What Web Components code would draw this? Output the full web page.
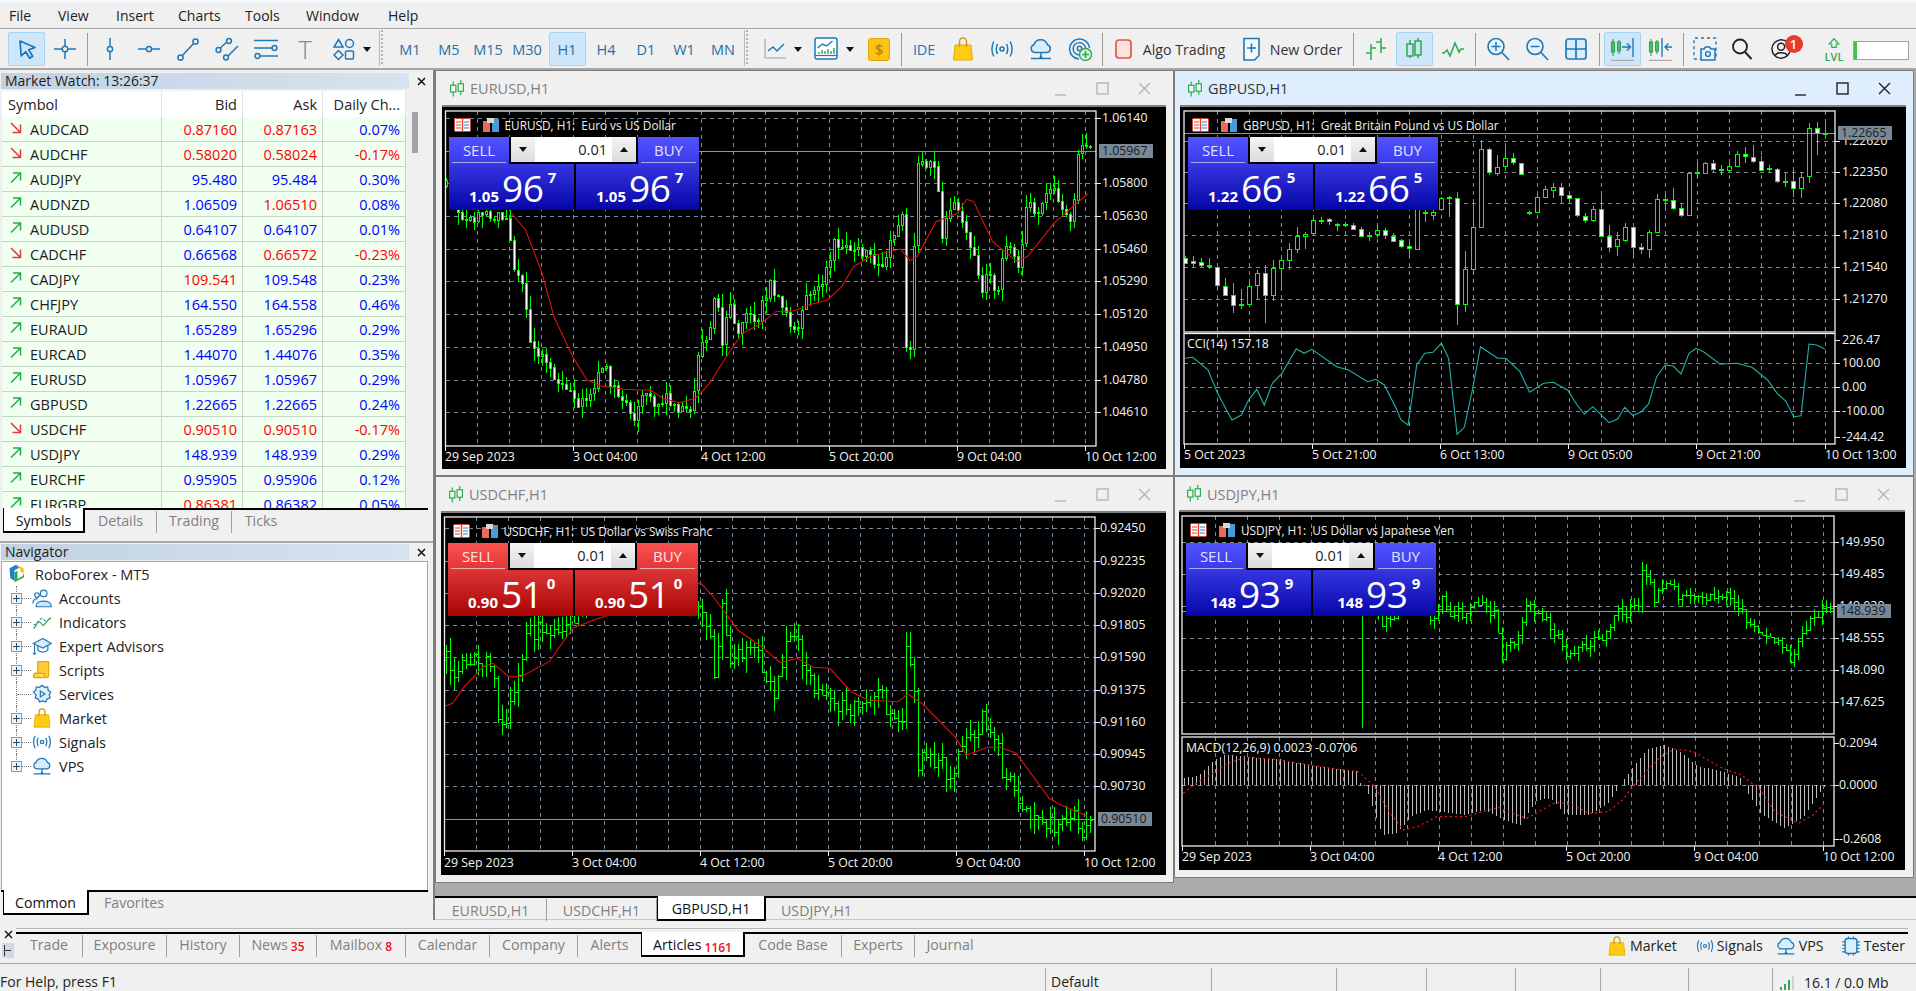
<!DOCTYPE html>
<html>
<head>
<meta charset="utf-8">
<title>MetaTrader 5</title>
<style>
  html, body { margin: 0; height: 100%; overflow: hidden; }
  body { width: 1916px; height: 991px; display: flex; flex-direction: column; background: #f0f0f0; color: #222;
         font: 14.5px "Open Sans", "Noto Sans", sans-serif; }
</style>
</head>
<body>
<mt-menubar></mt-menubar>
<mt-toolbar></mt-toolbar>
<mt-workspace>
  <market-watch slot="left"></market-watch>
  <nav-panel slot="left"></nav-panel>
  <chart-window slot="col1" name="EURUSD,H1" key="eurusd" hgt="406" pl="6" cw="724" ch="362" pb="6"></chart-window>
  <chart-window slot="col1" name="USDCHF,H1" key="usdchf" hgt="407" pl="5" cw="725" ch="362" pb="7"></chart-window>
  <chart-window slot="col2" name="GBPUSD,H1" key="gbpusd" hgt="406" pl="5" cw="726" ch="361" pb="7" active></chart-window>
  <chart-window slot="col2" name="USDJPY,H1" key="usdjpy" hgt="402" pl="4" cw="726" ch="358" pb="7"></chart-window>
  <tab-strip slot="tabs" flat>
    <mt-tab w="112">EURUSD,H1</mt-tab>
    <mt-tab w="110">USDCHF,H1</mt-tab>
    <mt-tab w="109" active>GBPUSD,H1</mt-tab>
    <mt-tab w="101" last>USDJPY,H1</mt-tab>
  </tab-strip>
</mt-workspace>
<mt-toolbox></mt-toolbox>
<mt-statusbar></mt-statusbar>

<script>
// icons, all on a 24x24 box
const B = '#1f78b8';
const ICONS = {
  cursor: `<path d="M5 4 20 10.5l-6.3 2.4 4 6.3-3 2-3.9-6.5-4.6 4.3z" fill="none" stroke="#1b74bb" stroke-width="1.7" stroke-linejoin="round"/>`,
  cross: `<path d="M12 2v20M1 12h22" stroke="${B}" stroke-width="1.5"/><circle cx="12" cy="12" r="2.8" fill="#f0f0f0" stroke="${B}" stroke-width="1.5"/>`,
  vline: `<path d="M12 1v22" stroke="${B}" stroke-width="1.5"/><circle cx="12" cy="12" r="2.6" fill="#f0f0f0" stroke="${B}" stroke-width="1.5"/>`,
  hline: `<path d="M1 12h22" stroke="${B}" stroke-width="1.5"/><circle cx="12" cy="12" r="2.6" fill="#f0f0f0" stroke="${B}" stroke-width="1.5"/>`,
  trend: `<path d="M5 20 19 5" stroke="${B}" stroke-width="1.5"/><circle cx="4.5" cy="20.5" r="2.6" fill="#f0f0f0" stroke="${B}" stroke-width="1.5"/><circle cx="19.5" cy="4.5" r="2.6" fill="#f0f0f0" stroke="${B}" stroke-width="1.5"/>`,
  channel: `<path d="M3 13 13 4M10 22 23 9" stroke="${B}" stroke-width="1.5"/><circle cx="3.5" cy="13" r="2.4" fill="#f0f0f0" stroke="${B}" stroke-width="1.5"/><circle cx="14" cy="4" r="2.4" fill="#f0f0f0" stroke="${B}" stroke-width="1.5"/><circle cx="11" cy="20.5" r="2.4" fill="#f0f0f0" stroke="${B}" stroke-width="1.5"/>`,
  fibo: `<path d="M0 3.5h24M0 11h18M5 19h19" stroke="${B}" stroke-width="1.6"/><circle cx="20.5" cy="11" r="2.4" fill="#f0f0f0" stroke="${B}" stroke-width="1.5"/><circle cx="3.5" cy="19" r="2.4" fill="#f0f0f0" stroke="${B}" stroke-width="1.5"/>`,
  shapes: `<path d="M6.5 2.5 11 10H2z" fill="none" stroke="${B}" stroke-width="1.5"/><circle cx="17.5" cy="6.5" r="4" fill="none" stroke="${B}" stroke-width="1.5"/><path d="M6.5 13.5l4.5 4.5-4.5 4.5L2 18z" fill="none" stroke="${B}" stroke-width="1.5"/><rect x="13.5" y="14" width="8" height="8" rx="1" fill="none" stroke="${B}" stroke-width="1.5"/>`,
  linechart: `<path d="M2 2v19h21" fill="none" stroke="#bbb" stroke-width="1.6"/><path d="M5 14l5-4 4 4 7-7" fill="none" stroke="${B}" stroke-width="1.5"/>`,
  chartwin: `<rect x="1" y="1" width="22" height="21" rx="2" fill="#fff" stroke="${B}" stroke-width="1.5"/><path d="M3.5 11l5-4 4 2 6-5" fill="none" stroke="${B}" stroke-width="1.4"/><path d="M5 17v-2M8 17v-4M11 17v-3M14 17v-5M17 17v-3M20 17v-6" stroke="#2fa84f" stroke-width="1.4"/><path d="M1 18.5h22" stroke="${B}" stroke-width="1.2"/>`,
  bag: `<path d="M4 8h16l1.5 15h-19z" fill="#ffcc11" stroke="#e3a90a"/><path d="M8.5 10V4.5a3.5 3.5 0 0 1 7 0V10" fill="none" stroke="#d19a0c" stroke-width="1.5"/>`,
  signal: `<circle cx="12" cy="12" r="2" fill="none" stroke="${B}" stroke-width="1.6"/><path d="M7.5 7Q5 12 7.5 17M16.5 7Q19 12 16.5 17M3.8 4.5Q0 12 3.8 19.5M20.2 4.5Q24 12 20.2 19.5" fill="none" stroke="${B}" stroke-width="1.5"/>`,
  cloud: `<path d="M6 15.5a4 4 0 0 1-1-7.8 7 7 0 0 1 13.4 0A4 4 0 0 1 18 15.5z" fill="#d8ecfa" stroke="${B}" stroke-width="1.5"/><path d="M12 15.5V21M2 21.5h20" stroke="${B}" stroke-width="1.5"/><circle cx="12" cy="20.5" r="1.6" fill="${B}"/>`,
  radar: `<path d="M11 22A10 10 0 1 1 21.5 11M11 18A6.2 6.2 0 1 1 17.5 11" fill="none" stroke="${B}" stroke-width="1.5"/><circle cx="11.5" cy="11.5" r="2.2" fill="none" stroke="${B}" stroke-width="1.5"/><circle cx="17.5" cy="17.5" r="6" fill="#d6f3dc" stroke="#2fa84f" stroke-width="1.4"/><path d="M17.5 14v7M14 17.5h7" stroke="#2fa84f" stroke-width="1.6"/>`,
  algo: `<rect x="4" y="3" width="15" height="18" rx="3" fill="#fde3de" stroke="#e0584a" stroke-width="1.7"/>`,
  neworder: `<path d="M4 1.5h15v17l-4.5 4.5H4z" fill="#f4fafe" stroke="${B}" stroke-width="1.6"/><path d="M11.5 6.5v9M7 11h9" stroke="${B}" stroke-width="1.6"/>`,
  bars: `<path d="M8 7v16M3 16h5M8 11h5M18 1v15M13 5h5M18 11h5" stroke="#2fa84f" stroke-width="1.5" fill="none"/>`,
  candles: `<path d="M8 3v18M16 1v20" stroke="#2fa84f" stroke-width="1.5"/><rect x="5" y="7" width="6" height="12" fill="#cce4f7" stroke="#2fa84f" stroke-width="1.5"/><rect x="13" y="4" width="6" height="14" fill="#cce4f7" stroke="#2fa84f" stroke-width="1.5"/>`,
  zigzag: `<path d="M1 16h2l3-3 3 6 5-13 4 9 2-3h3" fill="none" stroke="#2fa84f" stroke-width="1.6"/>`,
  zoomin: `<circle cx="10" cy="9.5" r="8" fill="#e6f3fc" stroke="${B}" stroke-width="1.6"/><path d="M16 15.5 23 23" stroke="${B}" stroke-width="1.7"/><path d="M10 5v9M5.5 9.5h9" stroke="${B}" stroke-width="1.5"/>`,
  zoomout: `<circle cx="10" cy="9.5" r="8" fill="#e6f3fc" stroke="${B}" stroke-width="1.6"/><path d="M16 15.5 23 23" stroke="${B}" stroke-width="1.7"/><path d="M5.5 9.5h9" stroke="${B}" stroke-width="1.5"/>`,
  grid: `<rect x="2" y="2" width="20" height="20" rx="2.5" fill="#d8ecfa" stroke="${B}" stroke-width="1.7"/><path d="M12 2v20M2 12h20" stroke="${B}" stroke-width="1.7"/>`,
  autoscroll: `<path d="M3 2v17M9 3v14" stroke="#2fa84f" stroke-width="1.2"/><rect x="1.5" y="5" width="3" height="10" fill="#2fa84f66" stroke="#2fa84f" stroke-width="1.1"/><rect x="7.5" y="5" width="3" height="9" fill="#2fa84f66" stroke="#2fa84f" stroke-width="1.1"/><path d="M12 10h8M17 6.5l3.5 3.5-3.5 3.5" fill="none" stroke="${B}" stroke-width="1.4"/><path d="M23 1v19" stroke="${B}" stroke-width="1.4"/><path d="M1 23.5h23" stroke="#aaa" stroke-width="1.4"/>`,
  shift: `<path d="M3 2v17M9 3v14" stroke="#2fa84f" stroke-width="1.2"/><rect x="1.5" y="5" width="3" height="10" fill="#2fa84f66" stroke="#2fa84f" stroke-width="1.1"/><rect x="7.5" y="5" width="3" height="9" fill="#2fa84f66" stroke="#2fa84f" stroke-width="1.1"/><path d="M14 1v19" stroke="${B}" stroke-width="1.4"/><path d="M24 10h-7M20.5 6.5 17 10l3.5 3.5" fill="none" stroke="${B}" stroke-width="1.4"/><path d="M1 23.5h23" stroke="#aaa" stroke-width="1.4"/>`,
  shot: `<rect x="1" y="1" width="22" height="21" rx="1" fill="none" stroke="${B}" stroke-width="1.4" stroke-dasharray="3 3"/><path d="M8 12h3l1.5-2h4l1.5 2h4v11H8z" fill="#e6f3fc" stroke="${B}" stroke-width="1.5"/><circle cx="15" cy="17" r="2.4" fill="none" stroke="${B}" stroke-width="1.4"/>`,
  search: `<circle cx="10" cy="9.5" r="7" fill="none" stroke="#222" stroke-width="1.8"/><path d="M15 15l6.5 7" stroke="#222" stroke-width="2"/>`,
  profile: `<circle cx="11" cy="12" r="10" fill="none" stroke="#222" stroke-width="1.6"/><circle cx="11" cy="9.5" r="3.8" fill="none" stroke="#222" stroke-width="1.6"/><path d="M4.5 19c1.5-4 11.5-4 13 0" fill="none" stroke="#222" stroke-width="1.6"/>`,
  arrowup: `<path d="M12 1 5.5 8H9v4.5h6V8h3.5z" fill="#e6f8ea" stroke="#2fa84f" stroke-width="1.5"/>`,
  accounts: `<circle cx="14" cy="6.5" r="4" fill="#eaf5fc" stroke="${B}" stroke-width="1.4"/><circle cx="6" cy="8.5" r="2.8" fill="#eaf5fc" stroke="${B}" stroke-width="1.4"/><path d="M5 21c0-7 18-7 18 0v1.5H5zM1 18.5c0-5 3-6 6-5.5" fill="#cfe6f7" stroke="${B}" stroke-width="1.4"/>`,
  indicators: `<path d="M2 20c3-3 4-9 7-8s3 6 6 3 4-7 8-8" fill="none" stroke="#2fa84f" stroke-width="1.5"/><path d="M2 15c4 1 6-6 9-7s5 5 8 2" fill="none" stroke="${B}" stroke-width="1.3" stroke-dasharray="3 2"/>`,
  advisors: `<path d="M13 3 1.5 9 13 14.5 23 9z" fill="#dbeefb" stroke="${B}" stroke-width="1.5"/><path d="M7 12v5c3 3 9 3 12 0v-5.5" fill="none" stroke="${B}" stroke-width="1.5"/><path d="M3 10v10" stroke="${B}" stroke-width="1.4"/><circle cx="3" cy="21" r="1.6" fill="${B}"/>`,
  scripts: `<path d="M7 2h13v17a2 2 0 0 1-2 2H3c-1 0-2-1-1-3l1-2h4z" fill="#ffcc33" stroke="#e3a90a" stroke-width="1.5"/><path d="M3 16h12l-1 5" fill="#ffe07a" stroke="#e3a90a" stroke-width="1.4"/>`,
  services: `<path d="M12 1.5l3 2.5 3.8-.4.6 3.8 3 2.4-1.7 3.3 1 3.6-3.6 1.4-1.7 3.4-3.6-1.2-3.6 1.2-1.7-3.4-3.6-1.4 1-3.6L1.6 9.8l3-2.4.6-3.8L9 4z" fill="#dbeefb" stroke="${B}" stroke-width="1.5"/><path d="M10 8.5v7l5.5-3.5z" fill="none" stroke="${B}" stroke-width="1.4"/>`,
  robo: `<path d="M3 5 11 1l5 3-7 3.5V20l-5-3z" fill="#1f7fd0"/><path d="M11 1l9 4v6l-4-2V5.5L13 4z" fill="#f2c318"/><path d="M9 22V10l3.5-2V18l7-4v-2l1-.5V16z" fill="#2aa84a"/>`,
  cpu: `<rect x="5" y="3" width="14" height="18" rx="3" fill="#dbeefb" stroke="${B}" stroke-width="1.6"/><path d="M1.5 7H5M1.5 11H5M1.5 15H5M1.5 19H5M19 7h3.5M19 11h3.5M19 15h3.5M19 19h3.5M9 3V.5M15 3V.5M9 21v2.5M15 21v2.5" stroke="${B}" stroke-width="1.4"/>`,
  candle: `<path d="M7 2v20M17 0v20" stroke="#2fa84f" stroke-width="1.6"/><rect x="3.5" y="7" width="7" height="9" fill="#f0fff0" stroke="#2fa84f" stroke-width="1.6"/><rect x="13.5" y="5" width="7" height="10" fill="#f0fff0" stroke="#2fa84f" stroke-width="1.6"/>`
};
const icon = (n, s = 24) => `<svg width="${s}" height="${s}" viewBox="0 0 24 24" style="display:block;flex:none">${ICONS[n]}</svg>`;

class MtMenubar extends HTMLElement {
  connectedCallback() {
    const menu = [['File', 49], ['View', 58], ['Insert', 62], ['Charts', 67], ['Tools', 61], ['Window', 82], ['Help', 40]];
    this.attachShadow({mode: 'open'}).innerHTML = `<style>
      :host { display: flex; flex: none; height: 25px; border-top: 3px solid #f6f7fb; border-bottom: 1px solid #a6a6a6; padding-left: 9px; align-items: center; font-size: 14px; color: #222; }
      span { flex: none; }
    </style>` + menu.map(m => `<span style="width:${m[1]}px">${m[0]}</span>`).join('');
  }
}
customElements.define('mt-menubar', MtMenubar);

// toolbar: each item names the x centre it sits on, margins come from that
class MtToolbar extends HTMLElement {
  connectedCallback() {
    const items = [
      {c: 26.5, i: 'cursor', on: 1}, {c: 65, i: 'cross'}, {c: 87.5, sep: 1},
      {c: 110, i: 'vline'}, {c: 149, i: 'hline'}, {c: 188, i: 'trend'}, {c: 227, i: 'channel'}, {c: 266, i: 'fibo'},
      {c: 305, t: 'T', cls: 'big'}, {c: 344, i: 'shapes'}, {c: 367, caret: 1}, {c: 382, grip: 1},
      {c: 410, t: 'M1'}, {c: 449, t: 'M5'}, {c: 488, t: 'M15'}, {c: 527, t: 'M30'}, {c: 567, t: 'H1', on: 1}, {c: 606, t: 'H4'}, {c: 646, t: 'D1'}, {c: 684, t: 'W1'}, {c: 723, t: 'MN'}, {c: 747, grip: 1},
      {c: 775, i: 'linechart'}, {c: 798, caret: 1}, {c: 826, i: 'chartwin'}, {c: 850, caret: 1}, {c: 879, dollar: 1}, {c: 901, sep: 1},
      {c: 924, t: 'IDE', cls: 'ide'}, {c: 963, i: 'bag'}, {c: 1002, i: 'signal'}, {c: 1041, i: 'cloud'}, {c: 1080, i: 'radar'}, {c: 1102.5, sep: 1},
      {c: 1124, i: 'algo'}, {c: 1184, t: 'Algo Trading', cls: 'txt', w: 88}, {c: 1252, i: 'neworder'}, {c: 1306, t: 'New Order', cls: 'txt', w: 74}, {c: 1353, sep: 1},
      {c: 1375, i: 'bars'}, {c: 1414, i: 'candles', on: 1}, {c: 1453, i: 'zigzag'}, {c: 1475.5, sep: 1},
      {c: 1498, i: 'zoomin'}, {c: 1537, i: 'zoomout'}, {c: 1576, i: 'grid'}, {c: 1599, sep: 1},
      {c: 1622, i: 'autoscroll', on: 1}, {c: 1660, i: 'shift'}, {c: 1683, sep: 1},
      {c: 1705, i: 'shot'}, {c: 1742, i: 'search'}, {c: 1782, profile: 1}, {c: 1834, lvl: 1}, {c: 1881, meter: 1}
    ];
    let end = 0, html = '';
    for (const it of items) {
      const w = it.w || (it.sep ? 3 : it.caret ? 10 : it.grip ? 6 : it.meter ? 56 : 37);
      const ml = it.c - w / 2 - end;
      end = it.c + w / 2;
      const st = `width:${w}px;margin-left:${ml}px`;
      if (it.sep) html += `<div class="sep" style="${st}"></div>`;
      else if (it.caret) html += `<div class="caret" style="${st}"></div>`;
      else if (it.grip) html += `<div class="grip" style="${st}"></div>`;
      else if (it.meter) html += `<div class="meter" style="${st}"><b></b></div>`;
      else if (it.dollar) html += `<div class="b" style="${st}"><span class="usd">$</span></div>`;
      else if (it.profile) html += `<div class="b" style="${st}">${icon('profile', 22)}<span class="badge">1</span></div>`;
      else if (it.lvl) html += `<div class="b lvl" style="${st}">${icon('arrowup', 18)}<span>LVL</span></div>`;
      else if (it.t) html += `<div class="b ${it.cls || 'tf'}${it.on ? ' on' : ''}" style="${st}">${it.t}</div>`;
      else html += `<div class="b${it.on ? ' on' : ''}" style="${st}">${icon(it.i)}</div>`;
    }
    this.attachShadow({mode: 'open'}).innerHTML = `<style>
      :host { display: flex; flex: none; box-sizing: border-box; height: 41px; border-bottom: 2px solid #a6a6a6; padding-top: 3px; align-items: flex-start; }
      .b { flex: none; box-sizing: border-box; height: 34px; display: flex; align-items: center; justify-content: center; border: 1px solid transparent; border-radius: 2px; position: relative; white-space: nowrap; }
      .on { background: #cde6f9; border-color: #a8d4f3; }
      .tf { color: #1f6fa5; font-size: 14.5px; }
      .big { color: #5a93bd; font-size: 26px; font-weight: 300; }
      .ide { color: #1f78b8; font-size: 14.5px; letter-spacing: -.2px; }
      .txt { color: #333; font-size: 14.2px; }
      .sep { flex: none; height: 33px; margin-top: 1px; position: relative; }
      .sep::after { content: ''; position: absolute; left: 1px; top: 0; bottom: 0; width: 1px; background: #9a9a9a; }
      .caret { flex: none; height: 32px; position: relative; }
      .caret::after { content: ''; position: absolute; left: 1px; top: 15px; border: 4.5px solid transparent; border-top: 5px solid #111; border-bottom: 0; }
      .grip { flex: none; height: 36px; margin-top: -2px; background: repeating-linear-gradient(#b5b5b5 0 2px, transparent 2px 4px); background-size: 2px 100%; background-repeat: no-repeat; background-position: 1px 0; border-left: 1px solid #bdbdbd; box-sizing: border-box; }
      .usd { width: 20px; height: 21px; border-radius: 3px; background: #fcc419; border: 1px solid #e0a400; color: #b5830a; font-size: 15px; font-weight: 600; display: flex; align-items: center; justify-content: center; }
      .badge { position: absolute; left: 20px; top: 2px; width: 18px; height: 18px; border-radius: 50%; background: #e8392b; color: #fff; font-size: 13px; font-weight: 600; display: flex; align-items: center; justify-content: center; }
      .lvl { flex-direction: column; justify-content: flex-start; padding-top: 5px; line-height: 10px; }
      .lvl span { color: #2fa84f; font-size: 11px; font-weight: 600; margin-top: -4px; }
      .meter { flex: none; box-sizing: border-box; height: 19px; margin-top: 9px; border: 1px solid #a0a0a0; background: #fff; }
      .meter b { display: block; width: 3px; height: 100%; background: #41c24a; }
    </style>${html}`;
  }
}
customElements.define('mt-toolbar', MtToolbar);

class MtWorkspace extends HTMLElement {
  connectedCallback() {
    this.attachShadow({mode: 'open'}).innerHTML = `<style>
      :host { display: flex; flex: none; height: 850px; }
      .left { width: 433px; flex: none; display: flex; flex-direction: column; }
      .mdi { flex: 1; display: flex; flex-direction: column; border-left: 2px solid #808080; min-width: 0; }
      .area { flex: none; height: 826px; background: #ababab; display: flex; align-items: flex-start; }
      .col { display: flex; flex-direction: column; }
      .c1 { width: 739px; }
      .c2 { width: 740px; }
    </style>
    <div class="left"><slot name="left"></slot></div>
    <div class="mdi">
      <div class="area">
        <div class="col c1"><slot name="col1"></slot></div>
        <div class="col c2"><slot name="col2"></slot></div>
      </div>
      <slot name="tabs"></slot>
    </div>`;
  }
}
customElements.define('mt-workspace', MtWorkspace);

class TabStrip extends HTMLElement {
  connectedCallback() {
    this.attachShadow({mode: 'open'}).innerHTML = `<style>
      :host { display: flex; flex: none; box-sizing: border-box; height: 25px; border-top: 2px solid #000; --tab-pb: 4px; }
      :host([flat]) { height: 24px; border-bottom: 1px solid #c8c8c8; --tab-pb: 0px; }
    </style><slot></slot>`;
  }
}
customElements.define('tab-strip', TabStrip);

class MtTab extends HTMLElement {
  connectedCallback() {
    this.attachShadow({mode: 'open'}).innerHTML = `<style>
      :host { display: flex; flex: none; position: relative; box-sizing: border-box; align-items: center; justify-content: center; width: ${this.getAttribute('w')}px; height: 22px; margin-top: 1px; padding-bottom: var(--tab-pb, 4px); color: #808080; font-size: 14.2px; border-right: 1px solid #a0a0a0; white-space: nowrap; }
      :host([last]) { border-right: 0; }
      :host([active]) { color: #111; background: #fff; height: 25px; margin-top: -2px; padding-top: 2px; padding-bottom: 0; border-left: 1px solid #000; border-right: 2px solid #000; border-bottom: 2px solid #000; }
    </style><slot></slot>`;
  }
}
customElements.define('mt-tab', MtTab);

class PaneTitle extends HTMLElement {
  connectedCallback() {
    this.attachShadow({mode: 'open'}).innerHTML = `<style>
      :host { display: flex; flex: none; height: 16px; align-items: center; font-size: 14px; color: #1d1d1d; }
      .bar { width: 408px; height: 16px; margin-left: 1px; padding-left: 4px; box-sizing: border-box; line-height: 15px; background: linear-gradient(90deg, #c2d2e2, #d6e3f0); white-space: nowrap; }
      svg { margin-left: 8px; }
    </style><div class="bar"><slot></slot></div>
    <svg width="9" height="9" viewBox="0 0 9 9"><path d="M1 1l7 7M8 1 1 8" stroke="#111" stroke-width="1.5"/></svg>`;
  }
}
customElements.define('pane-title', PaneTitle);

const UP = `<svg width="13" height="13" viewBox="0 0 13 13"><path d="M2 11.5 11 2.5M4 2h7.5v7.5" fill="none" stroke="#1fae4c" stroke-width="1.5"/></svg>`;
const DN = `<svg width="13" height="13" viewBox="0 0 13 13"><path d="M2 2 11 11M11.5 3.5V11.5H3.5" fill="none" stroke="#e23a3a" stroke-width="1.5"/></svg>`;

class MarketWatch extends HTMLElement {
  connectedCallback() {
    const rows = [
      ['d', 'AUDCAD', '0.87160', 'r', '0.87163', 'r', '0.07%', 'b'],
      ['d', 'AUDCHF', '0.58020', 'r', '0.58024', 'r', '-0.17%', 'r'],
      ['u', 'AUDJPY', '95.480', 'b', '95.484', 'b', '0.30%', 'b'],
      ['u', 'AUDNZD', '1.06509', 'b', '1.06510', 'r', '0.08%', 'b'],
      ['u', 'AUDUSD', '0.64107', 'b', '0.64107', 'b', '0.01%', 'b'],
      ['d', 'CADCHF', '0.66568', 'b', '0.66572', 'r', '-0.23%', 'r'],
      ['u', 'CADJPY', '109.541', 'r', '109.548', 'b', '0.23%', 'b'],
      ['u', 'CHFJPY', '164.550', 'b', '164.558', 'b', '0.46%', 'b'],
      ['u', 'EURAUD', '1.65289', 'b', '1.65296', 'b', '0.29%', 'b'],
      ['u', 'EURCAD', '1.44070', 'b', '1.44076', 'b', '0.35%', 'b'],
      ['u', 'EURUSD', '1.05967', 'b', '1.05967', 'b', '0.29%', 'b'],
      ['u', 'GBPUSD', '1.22665', 'b', '1.22665', 'b', '0.24%', 'b'],
      ['d', 'USDCHF', '0.90510', 'r', '0.90510', 'r', '-0.17%', 'r'],
      ['u', 'USDJPY', '148.939', 'b', '148.939', 'b', '0.29%', 'b'],
      ['u', 'EURCHF', '0.95905', 'b', '0.95906', 'b', '0.12%', 'b'],
      ['u', 'EURGBP', '0.86381', 'r', '0.86382', 'b', '0.05%', 'b']
    ];
    this.attachShadow({mode: 'open'}).innerHTML = `<style>
      :host { display: block; flex: none; height: 471px; box-sizing: border-box; padding-top: 3px; }
      .wrap { display: flex; height: 417px; margin-top: 2px; overflow: hidden; padding-left: 2px; }
      .tbl { width: 404px; flex: none; }
      .r { display: grid; grid-template-columns: 160px 81px 80px 83px; height: 25px; box-sizing: border-box; background: #f0fff0; border-bottom: 1px solid #c6d6c6; font-size: 14.5px; }
      .r > span { display: flex; align-items: center; justify-content: flex-end; padding-right: 5px; border-right: 1px solid #c6d6c6; white-space: nowrap; }
      .r > span:first-child { justify-content: flex-start; padding: 0 0 0 7px; gap: 8px; color: #1c1c1c; }
      .h { background: #fff; border-bottom: 0; height: 26px; color: #222; }
      .h > span { border-right: 1px solid #e4e4e4; }
      .r > span:first-child.hs { padding-left: 6px; }
      .r i { font-style: normal; }
      .r svg { display: block; flex: none; margin-top: -4px; }
      .rr { color: #ff0000; } .bb { color: #0000ff; }
      .sb { width: 22px; flex: none; position: relative; }
      .sb::after { content: ''; position: absolute; left: 6px; top: 21px; width: 6px; height: 41px; background: #a4a4a4; }
      tab-strip { margin: 0 5px 0 3px; }
    </style>
    <pane-title>Market Watch: 13:26:37</pane-title>
    <div class="wrap"><div class="tbl">
      <div class="r h"><span class="hs">Symbol</span><span>Bid</span><span>Ask</span><span>Daily Ch...</span></div>
      ${rows.map(r => `<div class="r"><span>${r[0] == 'u' ? UP : DN}<i>${r[1]}</i></span><span class="${r[3]}${r[3]}">${r[2]}</span><span class="${r[5]}${r[5]}">${r[4]}</span><span class="${r[7]}${r[7]}">${r[6]}</span></div>`).join('')}
    </div><div class="sb"></div></div>
    <tab-strip>
      <mt-tab w="82" active>Symbols</mt-tab>
      <mt-tab w="72">Details</mt-tab>
      <mt-tab w="75">Trading</mt-tab>
      <mt-tab w="58" last>Ticks</mt-tab>
    </tab-strip>`;
  }
}
customElements.define('market-watch', MarketWatch);

class NavPanel extends HTMLElement {
  connectedCallback() {
    const nodes = [
      ['accounts', 'Accounts', 1], ['indicators', 'Indicators', 1], ['advisors', 'Expert Advisors', 1], ['scripts', 'Scripts', 1],
      ['services', 'Services', 0], ['bag', 'Market', 1], ['signal', 'Signals', 1], ['cloud', 'VPS', 1]
    ];
    this.attachShadow({mode: 'open'}).innerHTML = `<style>
      :host { display: block; flex: none; height: 379px; box-sizing: border-box; border-top: 2px solid #a8a8a8; padding-top: 1px; }
      .tree { height: 329px; box-sizing: border-box; margin: 1px 5px 0 1px; border: 1px solid #a8a8a8; border-bottom: 0; background: #fff; font-size: 14.5px; color: #222; overflow: hidden; }
      .n { display: flex; align-items: center; height: 24px; position: relative; }
      .root { padding-left: 5px; gap: 8px; }
      .kid { padding-left: 29px; }
      .kid .ic { width: 22px; height: 22px; display: flex; justify-content: center; align-items: center; margin-right: 6px; }
      .kid::before { content: ''; position: absolute; left: 14px; top: 0; bottom: 0; border-left: 1px dotted #777; }
      .kid:last-child::before { bottom: 12px; }
      .kid::after { content: ''; position: absolute; left: 15px; width: 14px; top: 12px; border-top: 1px dotted #777; }
      .pm { position: absolute; left: 9px; top: 7px; width: 9px; height: 9px; background: #f4f4f4; border: 1px solid #9a9a9a; z-index: 1; }
      .pm::before { content: ''; position: absolute; left: 1px; right: 1px; top: 4px; height: 1px; background: #1d4f7a; }
      .pm::after { content: ''; position: absolute; top: 1px; bottom: 1px; left: 4px; width: 1px; background: #1d4f7a; }
      tab-strip { margin: 0 5px 0 1px; }
      mt-tab[w="86"] { margin-left: 2px; }
    </style>
    <pane-title>Navigator</pane-title>
    <div class="tree">
      <div class="n root">${icon('robo', 20)}<span>RoboForex - MT5</span></div>
      ${nodes.map(n => `<div class="n kid">${n[2] ? '<i class="pm"></i>' : ''}<span class="ic">${icon(n[0], 20)}</span><span>${n[1]}</span></div>`).join('')}
    </div>
    <tab-strip>
      <mt-tab w="86" active>Common</mt-tab>
      <mt-tab w="86" last>Favorites</mt-tab>
    </tab-strip>`;
  }
}
customElements.define('nav-panel', NavPanel);

class ChartWindow extends HTMLElement {
  connectedCallback() {
    const a = n => this.getAttribute(n);
    const on = this.hasAttribute('active');
    const line = on ? '#222' : '#b5b5b5';
    this.attachShadow({mode: 'open'}).innerHTML = `<style>
      :host { display: flex; flex-direction: column; flex: none; box-sizing: border-box; height: ${a('hgt')}px; border: 1px solid #7c7c7c; background: ${on ? '#deeefc' : '#f0f0f0'}; padding: 0 0 ${a('pb')}px ${a('pl')}px; }
      .tt { flex: 1; display: flex; align-items: center; box-sizing: border-box; width: ${a('cw')}px; border-bottom: 2px solid #808080; padding: 1px 0 0 6px; color: ${on ? '#333' : '#808080'}; font-size: 14.5px; }
      .tt span { margin-left: 4px; flex: 1; }
      .tt svg.w { margin-right: 25px; }
      .tt svg.w:last-child { margin-right: 13px; }
      mt-chart { width: ${a('cw')}px; height: ${a('ch')}px; }
    </style>
    <div class="tt">${icon('candle', 18)}<span>${a('name')}</span>
      <svg class="w" width="17" height="17" viewBox="0 0 17 17"><path d="M3 15h11" stroke="${line}" stroke-width="1.4"/></svg>
      <svg class="w" width="17" height="17" viewBox="0 0 17 17"><rect x="3" y="3" width="11" height="11" fill="none" stroke="${line}" stroke-width="1.4"/></svg>
      <svg class="w" width="17" height="17" viewBox="0 0 17 17"><path d="M3 3l11 11M14 3 3 14" stroke="${line}" stroke-width="1.4"/></svg>
    </div>
    <mt-chart key="${a('key')}"></mt-chart>`;
  }
}
customElements.define('chart-window', ChartWindow);

class TradePanel extends HTMLElement {
  connectedCallback() {
    const a = n => this.getAttribute(n);
    const red = a('tone') == 'red';
    const price = `<div class="p"><span class="s">${a('small')}</span><span class="l">${a('big')}</span><span class="u">${a('sup')}</span></div>`;
    this.attachShadow({mode: 'open'}).innerHTML = `<style>
      :host { display: grid; grid-template-columns: 60px 2px 125px 2px 61px; grid-template-rows: 27px 46px; width: 250px; background: #000; color: #fff; font-family: "Open Sans", sans-serif; }
      .btn { background: ${red ? 'linear-gradient(#fa5252,#e23434)' : 'linear-gradient(#5252ff,#3a3aea)'}; display: flex; align-items: center; justify-content: center; font-size: 15px; color: ${red ? '#ffe4e4' : '#dfe4ff'}; position: relative; padding-bottom: 2px; box-sizing: border-box; }
      .btn::after { content: ''; position: absolute; left: 3px; right: 3px; bottom: 1px; height: 1px; background: ${red ? '#f3b0b0' : '#a6acf0'}; }
      .lot { grid-column: 3; display: grid; grid-template-columns: 24px 1fr 24px; height: 25px; background: #fff; color: #222; font-size: 14.5px; }
      .lot span { display: flex; align-items: center; justify-content: flex-end; padding-right: 5px; }
      .st { background: linear-gradient(#f4f4f4,#dcdcdc); display: flex; align-items: center; justify-content: center; }
      .st::after { content: ''; border: 4px solid transparent; }
      .dn::after { border-top: 5px solid #111; border-bottom: 0; }
      .up::after { border-bottom: 5px solid #111; border-top: 0; }
      .p { background: ${red ? 'linear-gradient(#dd3434,#a80404)' : 'linear-gradient(#3636e2,#0505a6)'}; display: flex; align-items: baseline; height: 46px; box-sizing: border-box; line-height: 46px; padding-top: 1px; }
      .ps { grid-column: 1 / -1; display: grid; grid-template-columns: 125px 125px; }
      .ps .p + .p { margin-left: 2px; }
      .s { width: 50px; text-align: right; font-size: 15px; font-weight: 700; }
      .l { font-size: 37px; margin-left: 3px; letter-spacing: -.3px; }
      .u { font-size: 15px; font-weight: 700; margin-left: 4px; position: relative; top: -19px; }
    </style>
    <div class="btn">SELL</div><div></div>
    <div class="lot"><div class="st dn"></div><span>0.01</span><div class="st up"></div></div>
    <div></div><div class="btn">BUY</div>
    <div class="ps">${price}${price}</div>`;
  }
}
customElements.define('trade-panel', TradePanel);

// chart data, in page pixels. traces were read off the picture, tr() maps crop coordinates back to page ones
const tr = (pts, ax, sx, ay, sy) => pts.map(([x, y]) => [ax + x / sx, ay + y / sy]);
const seq = (from, to, step) => { const o = []; for (let x = from; x <= to; x += step) o.push(x); return o; };
function at(trace, x) {
  for (let i = 1; i < trace.length; i++) {
    if (x <= trace[i][0]) {
      const [x0, y0] = trace[i - 1], [x1, y1] = trace[i];
      return y0 + (y1 - y0) * (x - x0) / (x1 - x0 || 1);
    }
  }
  return trace[trace.length - 1][1];
}
function rnd(seed) { return () => (seed = (seed * 16807) % 2147483647) / 2147483647; }

const gbpA = [[265,280,1,258,282],[274,280,1,258,290],[275,283,1,265,290],[286,290,1,265,297],[290,345,1,285,356],[347,373,1,325,378],[374,403,1,340,428],[402,404,0,358,418],[347,400,0,330,408],[310,346,0,300,388],[310,376,1,285,458],[295,376,0,270,392],[271,295,0,260,350],[238,271,0,220,300],[198,238,0,172,250],[193,199,0,185,237],[150,190,0,145,192],[151,153,0,142,163],[148,154,1,143,165],[161,163,0,160,183],[161,163,0,155,170],[164,175,1,158,178],[176,196,1,170,198],[195,197,0,185,212],[181,193,0,165,205],[181,196,1,175,207],[197,211,1,188,215],[211,229,1,208,235],[229,235,1,215,260],[110,236,0,100,236],[125,127,1,100,155],[125,133,0,120,150],[84,118,0,82,118],[82,86,0,78,140],[85,403,1,65,465],[298,403,0,243,425],[172,298,0,90,315]]
  .map(b => [170 + b[0] / 3, 170 + b[1] / 3, b[2], 170 + b[3] / 3, 170 + b[4] / 3]);
const gbpB = [[448,682,0,420,685],[448,518,1,445,525],[500,518,0,465,527],[475,500,0,438,505],[475,488,1,458,495],[488,520,1,488,522],[635,638,0,632,645],[592,638,0,580,640],[568,592,0,558,595],[560,568,0,548,595],[560,585,1,550,608],[585,595,1,575,612],[595,645,1,595,650],[648,660,1,640,668],[628,660,0,618,665],[628,708,1,578,710],[708,740,1,675,755],[718,740,0,695,768],[680,718,0,670,725],[680,740,1,678,770],[742,748,1,728,762],[697,748,0,690,775],[598,697,0,582,700],[598,602,0,580,632],[600,625,1,565,630],[625,645,1,610,652],[520,645,0,518,648],[516,520,0,490,535],[488,518,0,485,520],[488,505,1,480,515],[508,510,0,495,525],[497,508,0,485,520],[462,497,0,452,498],[463,468,1,440,488],[470,482,1,435,490],[482,508,1,468,510],[505,508,1,495,515],[506,542,1,505,548],[542,545,1,520,560],[542,562,1,508,590],[530,562,0,515,595],[385,530,0,368,550],[385,400,1,365,465],[400,402,1,365,408]]
  .map(b => [b[0] / 3, b[1] / 3, b[2], b[3] / 3, b[4] / 3]);

const CHARTS = {
  eurusd: {
    x: 442, y: 107, w: 724, h: 362, frames: [[445.5, 111, 1096, 446]], vx: seq(477, 1085, 32),
    hy: [118, 183, 216, 249, 281, 314, 347, 380, 412],
    prices: ['1.06140', '1.05800', '1.05630', '1.05460', '1.05290', '1.05120', '1.04950', '1.04780', '1.04610'], lx: 1102,
    dateY: 457, dateX: [445, 573, 701, 829, 957, 1085], dates: ['29 Sep 2023', '3 Oct 04:00', '4 Oct 12:00', '5 Oct 20:00', '9 Oct 04:00', '10 Oct 12:00'],
    last: {y: 151, t: '1.05967', x: 1099}, title: 'EURUSD, H1:  Euro vs US Dollar',
    panel: {left: 449, top: 137, tone: 'blue', small: '1.05', big: '96', sup: '7'},
    kind: 'candle', step: 4, from: 446, to: 1092, seed: 77, wick: 13, jit: 13,
    trace: tr([[22,350],[60,440],[125,440],[155,440],[160,575],[175,610],[190,700],[200,820],[215,850],[240,870],[245,920],[270,930],[285,960],[300,990],[320,1010],[340,930],[355,890],[375,950],[390,990],[405,980],[415,1075],[430,990],[445,960],[460,1000],[490,970],[510,1030],[530,1000],[545,1020],[550,890],[565,820],[575,800],[595,660],[605,830],[620,700],[640,790],[655,720],[680,760],[692,690],[710,640],[725,680],[745,750],[765,770],[785,680],[800,650],[820,630],[838,570],[845,510],[870,520],[895,550],[925,560],[945,600],[958,520],[970,500],[990,420],[995,820],[1005,825],[1020,260],[1035,280],[1050,270],[1063,310],[1070,500],[1095,380],[1110,450],[1125,500],[1145,590],[1160,670],[1170,570],[1180,640],[1195,640],[1205,500],[1222,570],[1240,600],[1245,435],[1262,410],[1280,420],[1295,350],[1315,380],[1330,410],[1350,445],[1365,200],[1385,240]], 436, 2.12, 70, 3),
    ma: tr([[160,430],[190,480],[225,610],[250,740],[290,860],[320,930],[350,948],[400,958],[430,960],[455,960],[480,985],[515,998],[550,985],[580,940],[600,895],[625,840],[650,790],[690,760],[720,725],[760,722],[790,705],[830,690],[860,650],[885,590],[920,560],[960,545],[985,537],[1005,572],[1020,560],[1060,455],[1105,430],[1125,388],[1140,395],[1180,515],[1232,575],[1255,558],[1310,460],[1350,410],[1383,370]], 436, 2.12, 70, 3)
  },
  usdchf: {
    x: 441, y: 513, w: 725, h: 362, frames: [[444.5, 517, 1095, 851]], vx: seq(476, 1084, 32),
    hy: [528, 561, 593, 625, 657, 690, 722, 754, 786],
    prices: ['0.92450', '0.92235', '0.92020', '0.91805', '0.91590', '0.91375', '0.91160', '0.90945', '0.90730'], lx: 1100,
    dateY: 863, dateX: [444, 572, 700, 828, 956, 1084], dates: ['29 Sep 2023', '3 Oct 04:00', '4 Oct 12:00', '5 Oct 20:00', '9 Oct 04:00', '10 Oct 12:00'],
    last: {y: 819, t: '0.90510', x: 1098}, title: 'USDCHF, H1:  US Dollar vs Swiss Franc',
    panel: {left: 448, top: 543, tone: 'red', small: '0.90', big: '51', sup: '0'},
    kind: 'bar', step: 4, from: 446, to: 1091, seed: 41, wick: 15, jit: 18,
    trace: tr([[22,570],[50,620],[60,570],[100,570],[120,560],[135,770],[160,700],[180,560],[195,490],[220,480],[235,520],[260,480],[290,440],[320,400],[345,300],[530,300],[552,420],[570,420],[590,610],[605,410],[625,570],[640,520],[660,560],[680,520],[695,650],[720,660],[740,540],[760,470],[785,630],[800,650],[830,660],[850,720],[880,710],[900,690],[940,650],[955,730],[975,750],[990,780],[995,500],[1015,700],[1020,910],[1040,830],[1050,870],[1075,860],[1080,900],[1100,910],[1110,850],[1130,810],[1150,770],[1160,740],[1170,800],[1190,830],[1205,960],[1220,920],[1240,1020],[1260,1050],[1280,1040],[1300,1060],[1330,1070],[1350,1010],[1370,1120],[1385,1060]], 436, 2.12, 470, 3),
    ma: tr([[20,708],[35,700],[60,650],[100,590],[120,580],[155,620],[180,620],[240,575],[290,475],[340,447],[450,400],[560,338],[585,375],[640,480],[690,530],[730,578],[765,565],[800,592],[835,595],[880,665],[915,690],[980,695],[1000,672],[1030,700],[1100,800],[1125,855],[1170,832],[1195,832],[1230,850],[1300,985],[1325,1005],[1380,1038]], 436, 2.12, 470, 3)
  },
  gbpusd: {
    x: 1180, y: 107, w: 726, h: 361, frames: [[1184, 111, 1835, 332], [1184, 333.5, 1835, 444]], vx: seq(1217, 1825, 32),
    hy: [141, 172, 203, 235, 267, 299], prices: ['1.22620', '1.22350', '1.22080', '1.21810', '1.21540', '1.21270'], lx: 1842,
    subY: [363, 387, 411], subLabels: [[340, '226.47'], [363, '100.00'], [387, '0.00'], [411, '-100.00'], [437, '-244.42']],
    dateY: 455, dateX: [1184, 1312, 1440, 1568, 1696, 1825], dates: ['5 Oct 2023', '5 Oct 21:00', '6 Oct 13:00', '9 Oct 05:00', '9 Oct 21:00', '10 Oct 13:00'],
    last: {y: 133, t: '1.22665', x: 1838}, title: 'GBPUSD, H1:  Great Britain Pound vs US Dollar',
    panel: {left: 1188, top: 137, tone: 'blue', small: '1.22', big: '66', sup: '5'},
    kind: 'list', step: 8, from: 1184.67, list: gbpA.concat(gbpB),
    sub: {text: 'CCI(14) 157.18', x: 1187, y: 344, color: '#20b2aa', line: tr([[32,115],[48,112],[80,150],[100,220],[130,300],[150,285],[165,240],[182,208],[198,255],[215,190],[235,160],[265,87],[282,100],[298,88],[350,140],[375,150],[415,185],[432,178],[450,195],[475,265],[485,300],[500,315],[518,135],[535,100],[552,97],[570,70],[585,115],[603,343],[618,322],[635,210],[652,80],[688,115],[705,115],[735,155],[755,217],[785,190],[805,187],[835,210],[855,255],[870,282],[888,260],[922,308],[940,297],[955,262],[972,287],[990,275],[1005,252],[1022,170],[1040,135],[1057,138],[1073,162],[1090,100],[1105,85],[1122,97],[1155,133],[1190,130],[1222,142],[1255,180],[1275,220],[1293,243],[1310,290],[1325,287],[1342,72],[1358,75],[1375,87]], 1170, 2.1, 320, 3)}
  },
  usdjpy: {
    x: 1179, y: 512, w: 726, h: 358, frames: [[1182, 516, 1834, 734], [1182, 737, 1834, 846]], vx: seq(1214.5, 1823, 32),
    hy: [542, 574, 606, 638, 670, 702], prices: ['149.950', '149.485', '149.020', '148.555', '148.090', '147.625'], lx: 1839,
    subY: [785], subLabels: [[743, '0.2094'], [785, '0.0000'], [839, '-0.2608']],
    dateY: 857, dateX: [1182, 1310, 1438, 1566, 1694, 1823], dates: ['29 Sep 2023', '3 Oct 04:00', '4 Oct 12:00', '5 Oct 20:00', '9 Oct 04:00', '10 Oct 12:00'],
    last: {y: 611, t: '148.939', x: 1837}, title: 'USDJPY, H1:  US Dollar vs Japanese Yen',
    panel: {left: 1186, top: 543, tone: 'blue', small: '148', big: '93', sup: '9'},
    kind: 'bar', step: 4, from: 1378, to: 1830, seed: 23, wick: 9, jit: 8,
    spike: [1362.5, 615, 728],
    trace: tr([[583,172],[595,200],[605,185],[620,175],[632,185],[650,100],[725,100],[740,195],[750,172],[775,110],[790,145],[800,180],[815,150],[825,130],[835,180],[850,165],[860,130],[880,130],[905,120],[910,160],[930,145],[945,240],[955,295],[970,240],[990,250],[1005,230],[1015,185],[1030,125],[1050,150],[1065,175],[1085,180],[1090,120],[1100,235],[1125,210],[1130,250],[1150,285],[1175,262],[1195,250],[1220,260],[1230,220],[1255,235],[1280,195],[1300,155],[1325,170],[1340,125],[1365,135],[1375,30],[1387,60],[1400,65],[1412,130],[1425,85],[1440,70],[1470,75],[1485,135],[1495,100],[1530,115],[1560,110]], 1184, 3, 560, 3)
      .concat([[1723, 595], [1735, 599], [1748, 623], [1766, 635], [1784, 648], [1790, 660], [1808, 623], [1820, 611], [1830, 605]]),
    sub: {text: 'MACD(12,26,9) 0.0023 -0.0706', x: 1186, y: 748, macd: 1,
      hist: tr([[30,235],[60,225],[90,185],[110,165],[130,165],[170,172],[230,178],[290,195],[340,205],[395,215],[400,257],[410,260],[420,300],[445,405],[475,400],[510,345],[540,330],[620,345],[660,330],[700,360],[735,375],[770,300],[800,295],[830,345],[880,345],[920,310],[935,275],[950,245],[970,205],[1000,150],[1035,135],[1065,150],[1110,200],[1150,210],[1200,235],[1205,257],[1215,285],[1240,340],[1290,385],[1330,350],[1365,275],[1375,260]], 1170, 2.1, 700, 3),
      line: tr([[28,280],[60,245],[90,220],[120,190],[160,172],[220,178],[280,192],[340,205],[395,215],[430,260],[460,335],[490,390],[520,380],[560,350],[620,350],[690,322],[720,340],[750,355],[810,307],[840,312],[880,340],[920,335],[950,300],[980,245],[1030,170],[1060,147],[1100,155],[1160,205],[1200,225],[1240,270],[1270,335],[1320,370],[1350,345],[1378,305]], 1170, 2.1, 700, 3)}
  }
};

const pl = pts => pts.map(p => p[0].toFixed(1) + ',' + p[1].toFixed(1)).join(' ');

class MtChart extends HTMLElement {
  connectedCallback() {
    const c = CHARTS[this.getAttribute('key')];
    const r = rnd(c.seed || 5);
    const main = c.frames[0], bot = c.frames[c.frames.length - 1];
    let s = '';
    // grid
    let g = '';
    for (const f of c.frames) for (const x of c.vx) g += `M${x + .5} ${f[1]}V${f[3]}`;
    for (const y of c.hy) g += `M${main[0]} ${y + .5}H${main[2]}`;
    for (const y of c.subY || []) g += `M${bot[0]} ${y + .5}H${bot[2]}`;
    s += `<path d="${g}" stroke="#778899" stroke-dasharray="4 4" shape-rendering="crispEdges"/>`;
    // price bars
    let bars = '';
    if (c.kind == 'list') {
      c.list.forEach((b, i) => {
        const x = Math.round(c.from + i * c.step) + .5;
        const t = Math.round(b[0]) + .5, h = Math.max(Math.round(b[1] - b[0]), 1);
        bars += `<path d="M${x} ${b[3]}V${b[4]}" stroke="#00ff00"/><rect x="${x - 2}" y="${t}" width="4" height="${h}" fill="${b[2] ? '#fff' : '#000'}" stroke="#00ff00"/>`;
      });
    } else {
      let prev = at(c.trace, c.from);
      for (let x = c.from; x <= c.to; x += c.step) {
        const cl = at(c.trace, x) + (r() - .5) * c.jit;
        const hi = Math.min(prev, cl) - r() * c.wick, lo = Math.max(prev, cl) + r() * c.wick;
        const px = Math.round(x) + .5;
        bars += `<path d="M${px} ${hi.toFixed(0)}V${lo.toFixed(0)}" stroke="#00ff00"/>`;
        if (c.kind == 'candle') {
          const t = Math.round(Math.min(prev, cl)) + .5, h = Math.max(Math.round(Math.abs(prev - cl)), 1);
          bars += `<rect x="${px - 1}" y="${t}" width="2" height="${h}" fill="${cl < prev ? '#000' : '#fff'}" stroke="#00ff00"/>`;
        } else {
          bars += `<path d="M${px - 2} ${Math.round(prev) + .5}h2M${px} ${Math.round(cl) + .5}h2" stroke="#00ff00"/>`;
        }
        prev = cl;
      }
      if (c.spike) bars += `<path d="M${c.spike[0]} ${c.spike[1]}V${c.spike[2]}" stroke="#00ff00"/>`;
    }
    s += `<g clip-path="url(#cp)" shape-rendering="crispEdges">${bars}</g>`;
    if (c.ma) s += `<polyline points="${pl(c.ma)}" fill="none" stroke="#e01010" stroke-width="1.1"/>`;
    // sub window
    if (c.sub) {
      if (c.sub.macd) {
        let h = '';
        for (let x = bot[0] + 2; x < bot[2] - 8; x += 4) h += `M${Math.round(x) + .5} 785V${at(c.sub.hist, x).toFixed(0)}`;
        s += `<path d="${h}" stroke="#bdbdbd" fill="none" shape-rendering="crispEdges"/><polyline points="${pl(c.sub.line)}" fill="none" stroke="#ff1010" stroke-width="1.2" stroke-dasharray="2 3"/>`;
      } else {
        s += `<polyline points="${pl(c.sub.line)}" fill="none" stroke="${c.sub.color}" stroke-width="1.1"/>`;
      }
    }
    s += `<path d="M${main[0]} ${c.last.y + .5}H${main[2]}" stroke="#8896a4"/>`;
    // frames and ticks
    for (const f of c.frames) s += `<rect x="${f[0]}" y="${f[1]}" width="${f[2] - f[0]}" height="${f[3] - f[1]}" fill="none" stroke="#eee" stroke-width="1.3"/>`;
    for (const x of c.dateX) s += `<path d="M${x + .5} ${bot[3]}v5" stroke="#eee"/>`;
    for (const y of c.hy) s += `<path d="M${main[2]} ${y + .5}h5" stroke="#eee"/>`;
    for (const l of c.subLabels || []) s += `<path d="M${bot[2]} ${l[0] + .5}h5" stroke="#eee"/>`;

    const lab = (x, y, t, cl = '') => `<span class="lb ${cl}" style="left:${x - c.x}px;top:${y - c.y}px">${t}</span>`;
    let labels = c.prices.map((t, i) => lab(c.lx, c.hy[i], t)).join('');
    labels += (c.subLabels || []).map(l => lab(c.lx, l[0], l[1])).join('');
    labels += c.dates.map((t, i) => lab(c.dateX[i], c.dateY, t)).join('');
    if (c.sub) labels += lab(c.sub.x, c.sub.y, c.sub.text);
    labels += lab(c.last.x, c.last.y, c.last.t, 'last');

    const fx = main[0] - c.x;
    this.attachShadow({mode: 'open'}).innerHTML = `<style>
      :host { display: block; flex: none; position: relative; background: #000; overflow: hidden; font-family: "Open Sans", sans-serif; }
      svg.p { position: absolute; inset: 0; display: block; }
      .lb { position: absolute; transform: translateY(-50%); color: #f4f4f4; font-size: 12.3px; line-height: 14px; white-space: pre; }
      .last { background: #778899; color: #1a1a1a; padding: 0 2px 0 3px; width: 49px; height: 14px; overflow: hidden; }
      .hd { position: absolute; left: ${fx + 8}px; top: ${main[1] - c.y + 6}px; display: flex; align-items: center; color: #f0f0f0; font-size: 11.8px; white-space: pre; line-height: 16px; }
      .hd svg { display: block; flex: none; }
      trade-panel { position: absolute; left: ${c.panel.left - c.x}px; top: ${c.panel.top - c.y}px; }
    </style>
    <svg class="p" width="${c.w}" height="${c.h}" viewBox="${c.x} ${c.y} ${c.w} ${c.h}">
      <defs><clipPath id="cp"><rect x="${main[0]}" y="${main[1]}" width="${main[2] - main[0]}" height="${main[3] - main[1]}"/></clipPath></defs>
      ${s}
    </svg>
    ${labels}
    <div class="hd">
      <svg width="17" height="14" viewBox="0 0 17 14"><rect x=".5" y=".5" width="16" height="13" rx="1" fill="#fff" stroke="#d8402f"/><path d="M8.5 1v12" stroke="#d8402f" stroke-width="1.4"/><path d="M2 4h5M2 7h5M2 10h5" stroke="#d8402f"/><path d="M10 4h5M10 7h5M10 10h5" stroke="#2b7cc4"/></svg>
      <svg style="margin-left:11px" width="18" height="15" viewBox="0 0 18 15"><path d="M1 3h7v11H1z" fill="#e86a5c"/><path d="M10 1h7v13h-7z" fill="#4a9ad8"/><rect x="5" y="0" width="7" height="5" fill="#d8d8d8"/></svg>
      <span style="margin-left:5px">${c.title}</span>
    </div>
    <trade-panel tone="${c.panel.tone}" small="${c.panel.small}" big="${c.panel.big}" sup="${c.panel.sup}"></trade-panel>`;
  }
}
customElements.define('mt-chart', MtChart);

class MtToolbox extends HTMLElement {
  connectedCallback() {
    const sub = t => `<sub style="color:#f0102a;font-size:12px;font-weight:600;margin:5px 0 0 3px;vertical-align:baseline">${t}</sub>`;
    this.attachShadow({mode: 'open'}).innerHTML = `<style>
      :host { display: flex; flex: none; box-sizing: border-box; height: 44px; border-bottom: 1px solid #a8a8a8; font-size: 14.2px; }
      .side { width: 16px; flex: none; display: flex; flex-direction: column; align-items: center; padding-top: 10px; box-sizing: border-box; }
      .side b { display: block; width: 12px; height: 15px; margin-top: 4px; background: #cdd9e6; position: relative; }
      .side b::before { content: ''; position: absolute; left: 2px; top: 2px; bottom: 2px; width: 1px; background: #333; }
      .side b::after { content: ''; position: absolute; left: 2px; top: 7px; width: 7px; height: 1px; background: #333; }
      .main { flex: 1; margin: 8px 8px 0 0; border-top: 1px solid #b8b8b8; padding-top: 3px; }
      tab-strip { padding-right: 3px; }
      .sp { flex: 1; }
      .x { display: flex; align-items: center; flex: none; height: 21px; color: #222; margin-top: 1px; }
      .x svg { margin: 0 3px 0 0; }
    </style>
    <div class="side"><svg width="9" height="9" viewBox="0 0 9 9"><path d="M1 1l7 7M8 1 1 8" stroke="#111" stroke-width="1.4"/></svg><b></b></div>
    <div class="main"><tab-strip>
      <mt-tab w="67">Trade</mt-tab><mt-tab w="84">Exposure</mt-tab><mt-tab w="73">History</mt-tab>
      <mt-tab w="77">News${sub('35')}</mt-tab>
      <mt-tab w="89">Mailbox${sub('8')}</mt-tab>
      <mt-tab w="84">Calendar</mt-tab><mt-tab w="88">Company</mt-tab><mt-tab w="63" last>Alerts</mt-tab>
      <mt-tab w="104" active>Articles${sub('1161')}</mt-tab>
      <mt-tab w="97">Code Base</mt-tab><mt-tab w="73">Experts</mt-tab><mt-tab w="70" last>Journal</mt-tab>
      <span class="sp"></span>
      <span class="x">${icon('bag', 20)}Market</span>
      <span class="x" style="margin-left:19px">${icon('signal', 18)}Signals</span>
      <span class="x" style="margin-left:13px">${icon('cloud', 20)}VPS</span>
      <span class="x" style="margin-left:17px">${icon('cpu', 20)}Tester</span>
    </tab-strip></div>`;
  }
}
customElements.define('mt-toolbox', MtToolbox);

class MtStatusbar extends HTMLElement {
  connectedCallback() {
    const cells = [['For Help, press F1', 1046], ['Default', 166], ['', 125], ['', 90], ['', 89], ['', 85], ['', 88], ['', 84]];
    this.attachShadow({mode: 'open'}).innerHTML = `<style>
      :host { display: flex; flex: none; box-sizing: border-box; height: 27px; padding-top: 4px; font-size: 14px; color: #222; }
      .c { flex: none; box-sizing: border-box; height: 23px; line-height: 27px; border-right: 1px solid #a8a8a8; padding-left: 5px; white-space: nowrap; }
      .f { padding-left: 0; }
      .m { display: flex; align-items: center; padding-left: 6px; height: 23px; gap: 7px; padding-top: 3px; }
    </style>
    ${cells.map((c, i) => `<div class="c${i ? '' : ' f'}" style="width:${c[1]}px">${c[0]}</div>`).join('')}
    <div class="m"><svg width="18" height="15" viewBox="0 0 18 15"><path d="M1 15v-3h2v3zM5 15V9h2v6zM9 15V5h2v10z" fill="#2fa84f"/><path d="M13 15V1h2v14z" fill="#d0d0d0"/></svg><span>16.1 / 0.0 Mb</span></div>`;
  }
}
customElements.define('mt-statusbar', MtStatusbar);
</script>
</body>
</html>
